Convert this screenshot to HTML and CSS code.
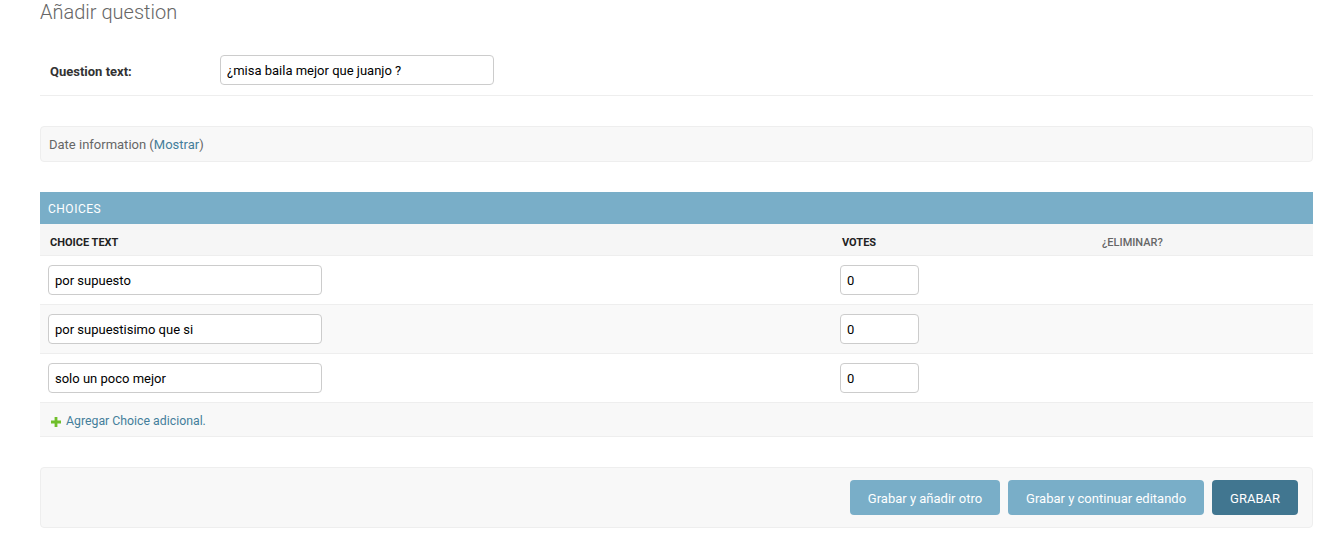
FILE: index.html
```html
<!DOCTYPE html>
<html lang="es">
<head>
<meta charset="utf-8">
<title>Añadir question</title>
<link rel="stylesheet" href="styles.css">
</head>
<body>
<div class="content">
  <h1 class="title">Añadir question</h1>

  <div class="form-row">
    <label class="field-label" for="q">Question text:</label>
    <input id="q" class="text-input question-input" type="text" value="¿misa baila mejor que juanjo ?">
  </div>

  <div class="collapsed-box">Date information (<a href="#" class="link">Mostrar</a>)</div>

  <div class="inline-group">
    <h2 class="inline-title">Choices</h2>
    <table class="inline-table">
      <thead>
        <tr>
          <th class="col-text required">Choice text</th>
          <th class="col-votes required">Votes</th>
          <th class="col-delete">¿Eliminar?</th>
        </tr>
      </thead>
      <tbody>
        <tr class="row1">
          <td><input class="text-input choice-input" type="text" value="por supuesto"></td>
          <td><input class="text-input votes-input" type="text" value="0"></td>
          <td></td>
        </tr>
        <tr class="row2">
          <td><input class="text-input choice-input" type="text" value="por supuestisimo que si"></td>
          <td><input class="text-input votes-input" type="text" value="0"></td>
          <td></td>
        </tr>
        <tr class="row1">
          <td><input class="text-input choice-input" type="text" value="solo un poco mejor"></td>
          <td><input class="text-input votes-input" type="text" value="0"></td>
          <td></td>
        </tr>
        <tr class="add-row">
          <td colspan="3">
            <a href="#" class="add-link">
              <svg class="plus-icon" width="10" height="10" viewBox="0 0 10 10" aria-hidden="true"><path d="M3.6 0h2.8v3.6H10v2.8H6.4V10H3.6V6.4H0V3.6h3.6z" fill="#70bf2b"/></svg>
              Agregar Choice adicional.
            </a>
          </td>
        </tr>
      </tbody>
    </table>
  </div>

  <div class="submit-row">
    <button class="btn">Grabar y añadir otro</button>
    <button class="btn">Grabar y continuar editando</button>
    <button class="btn btn-default">GRABAR</button>
  </div>
</div>
</body>
</html>
```
FILE: styles.css
```css
* { box-sizing: border-box; }
html, body { margin: 0; padding: 0; background: #fff; }
body {
  font-family: Roboto, "Liberation Sans", sans-serif;
  font-size: 13px;
  color: #333;
}
.content { padding: 0 30px 0 40px; }

.title {
  margin: 0 0 22px;
  padding-top: 1px;
  font-size: 20px;
  line-height: 22px;
  font-weight: 300;
  color: #666;
}

.form-row {
  display: flex;
  align-items: center;
  padding: 10px;
  border-bottom: 1px solid #eee;
}
.field-label {
  width: 170px;
  font-size: 13px;
  font-weight: 700;
  color: #333;
  padding-top: 2px;
}

.text-input {
  height: 30px;
  border: 1px solid #ccc;
  border-radius: 4px;
  padding: 5px 6px;
  font-family: Roboto, "Liberation Sans", sans-serif;
  font-size: 13px;
  color: #000;
  background: #fff;
  margin: 0;
  display: block;
}
.question-input { width: 274px; }
.choice-input { width: 274px; }
.votes-input { width: 79px; }

.collapsed-box {
  margin-top: 30px;
  background: #f8f8f8;
  border: 1px solid #eee;
  border-radius: 4px;
  padding: 10px 8px 8px;
  font-size: 13px;
  line-height: 16px;
  color: #666;
}
.link { color: #447e9b; text-decoration: none; }

.inline-group { margin-top: 30px; }
.inline-title {
  margin: 0;
  background: #79aec8;
  color: #fff;
  font-size: 12px;
  font-weight: 400;
  letter-spacing: 0.5px;
  text-transform: uppercase;
  line-height: 16px;
  padding: 9px 8px 7px;
}

.inline-table {
  width: 100%;
  border-collapse: collapse;
}
.inline-table th {
  background: #f6f6f6;
  text-align: left;
  font-size: 11px;
  line-height: 15px;
  text-transform: uppercase;
  padding: 11px 10px 5px;
  border-bottom: 1px solid #eee;
}
.inline-table th.required { color: #222; font-weight: 700; }
.inline-table th.col-delete { color: #666; font-weight: 500; }
.col-text { width: 792px; }
.col-votes { width: 260px; }

.inline-table td {
  padding: 9px 8px;
  border-bottom: 1px solid #eee;
  vertical-align: top;
}
.row1 td { background: #fff; }
.row2 td { background: #f9f9f9; }

.add-row td {
  background: #f8f8f8;
  padding: 11px 10px 6px;
  line-height: 15px;
}
.add-link {
  color: #447e9b;
  text-decoration: none;
  font-size: 12.3px;
  display: inline-flex;
  align-items: center;
  gap: 5px;
  padding-left: 1px;
}
.plus-icon { display: block; }

.submit-row {
  margin-top: 30px;
  background: #f8f8f8;
  border: 1px solid #eee;
  border-radius: 4px;
  padding: 12px 14px;
  display: flex;
  justify-content: flex-end;
  gap: 8px;
}
.btn {
  background: #79aec8;
  color: #fff;
  border: none;
  border-radius: 4px;
  font-family: Roboto, "Liberation Sans", sans-serif;
  font-size: 13px;
  line-height: 15px;
  padding: 11px 18px 9px;
  height: 35px;
  margin: 0;
  cursor: pointer;
}
.btn-default { background: #417690; }
```
